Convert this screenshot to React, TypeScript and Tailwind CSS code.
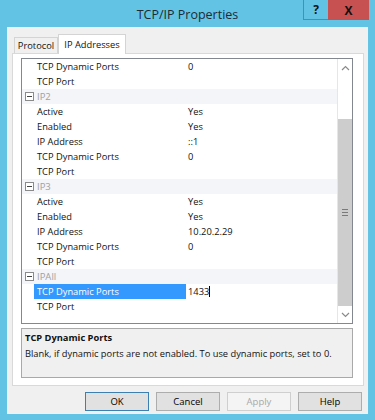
import React from "react";

type Row =
  | { kind: "prop"; name: string; value?: string; selected?: boolean }
  | { kind: "cat"; name: string };

const rows: Row[] = [
  { kind: "prop", name: "TCP Dynamic Ports", value: "0" },
  { kind: "prop", name: "TCP Port" },
  { kind: "cat", name: "IP2" },
  { kind: "prop", name: "Active", value: "Yes" },
  { kind: "prop", name: "Enabled", value: "Yes" },
  { kind: "prop", name: "IP Address", value: "::1" },
  { kind: "prop", name: "TCP Dynamic Ports", value: "0" },
  { kind: "prop", name: "TCP Port" },
  { kind: "cat", name: "IP3" },
  { kind: "prop", name: "Active", value: "Yes" },
  { kind: "prop", name: "Enabled", value: "Yes" },
  { kind: "prop", name: "IP Address", value: "10.20.2.29" },
  { kind: "prop", name: "TCP Dynamic Ports", value: "0" },
  { kind: "prop", name: "TCP Port" },
  { kind: "cat", name: "IPAll" },
  { kind: "prop", name: "TCP Dynamic Ports", value: "1433", selected: true },
  { kind: "prop", name: "TCP Port" },
];

function MinusBox() {
  return (
    <div className="w-[9px] h-[9px] border border-[#8a8a8a] bg-white flex items-center justify-center">
      <div className="w-[5px] h-px bg-[#444]" />
    </div>
  );
}

function GridRow({ row }: { row: Row }) {
  if (row.kind === "cat") {
    return (
      <div className="h-[15px] flex items-center bg-[#f3f5f9]">
        <div className="w-[15px] flex justify-end pr-[3px]">
          <MinusBox />
        </div>
        <span className="text-[#a0a0a0] font-medium text-[9.5px]">{row.name}</span>
      </div>
    );
  }
  return (
    <div className="h-[15px] flex items-center">
      <div className="w-[12px] self-stretch" />
      <div
        className={
          row.selected
            ? "w-[152px] self-stretch flex items-center pl-[3px] bg-[#3399ff] text-white"
            : "w-[152px] self-stretch flex items-center pl-[3px] text-[#111]"
        }
      >
        {row.name}
      </div>
      <div className="flex-1 pl-[2px] flex items-center text-[#111]">
        {row.value}
        {row.selected && <span className="w-px h-[11px] bg-black" />}
      </div>
    </div>
  );
}

function Chevron({ up }: { up?: boolean }) {
  return (
    <svg width="9" height="6" viewBox="0 0 9 6">
      <path
        d={up ? "M1 5 L4.5 1.5 L8 5" : "M1 1 L4.5 4.5 L8 1"}
        stroke="#8a8a8a"
        strokeWidth="1.2"
        fill="none"
      />
    </svg>
  );
}

function ScrollBar() {
  return (
    <div className="w-[15px] flex flex-col border-l border-[#e6e6e6] bg-[#f4f4f4]">
      <div className="h-[17px] flex items-center justify-center bg-white">
        <Chevron up />
      </div>
      <div className="h-[43px] bg-white" />
      <div className="flex-1 bg-[#cdcdcd] flex items-center justify-center">
        <div className="flex flex-col gap-[2px] w-[6px]">
          <div className="h-px bg-[#7a7a7a]" />
          <div className="h-px bg-[#7a7a7a]" />
          <div className="h-px bg-[#7a7a7a]" />
        </div>
      </div>
      <div className="h-[17px] flex items-center justify-center bg-white">
        <Chevron />
      </div>
    </div>
  );
}

function Btn({ label, kind }: { label: string; kind?: "default" | "disabled" }) {
  const cls =
    kind === "default"
      ? "border-[#3c7fb1] bg-[#e1e1e1] text-black"
      : kind === "disabled"
      ? "border-[#cfcfcf] bg-[#f4f4f4] text-[#a8a8a8]"
      : "border-[#adadad] bg-[#e1e1e1] text-black";
  return (
    <div className={"w-[64px] h-[19px] border flex items-center justify-center text-[9.5px] " + cls}>
      {label}
    </div>
  );
}

export default function App() {
  return (
    <div
      className="w-[375px] h-[420px] bg-[#62c3e4] flex flex-col text-[9.3px] leading-[15px] overflow-hidden"
      style={{ fontFamily: '"Open Sans", "Noto Sans", sans-serif' }}
    >
      {/* title bar */}
      <div className="h-[27px] flex shrink-0">
        <div className="w-[72px]" />
        <div className="flex-1 flex items-center justify-center text-[12.5px] text-[#1e2b36] pt-[1px]">
          TCP/IP Properties
        </div>
        <div className="flex items-start pr-[6px]">
          <div className="w-[25px] h-[20px] border-l border-b border-[#3f93b5] flex items-center justify-center text-[12px] font-bold text-[#111]">
            ?
          </div>
          <div className="w-[41px] h-[20px] bg-[#c75050] flex items-center justify-center text-[12px] font-bold text-[#111]">
            X
          </div>
        </div>
      </div>

      {/* client area */}
      <div className="mx-[7px] h-[387px] bg-[#f0f0f0] flex flex-col">
        {/* tabs */}
        <div className="flex items-end pl-[7px] pt-[6px] h-[26px] shrink-0">
          <div className="w-[44px] h-[16px] border border-b-0 border-[#d4d4d4] bg-[#f0f0f0] flex items-center justify-center text-[#111]">
            Protocol
          </div>
          <div className="w-[68px] h-[20px] -mb-px relative border border-b-0 border-[#d4d4d4] bg-white flex items-center justify-center text-[#111]">
            IP Addresses
          </div>
        </div>

        {/* panel */}
        <div className="ml-[5px] w-[352px] h-[333px] border border-[#d9d9d9] bg-white flex flex-col pt-[4px] pl-[8px]">
          {/* property grid */}
          <div className="w-[332px] h-[266px] border border-[#828790] flex bg-white">
            <div className="flex-1 flex flex-col">
              {rows.map((r, i) => (
                <GridRow key={i} row={r} />
              ))}
            </div>
            <ScrollBar />
          </div>

          {/* description */}
          <div className="mt-[4px] w-[332px] h-[50px] border border-[#a9a9a9] bg-[#f0f0f0] px-[3px] pt-[1px] text-[#111]">
            <div className="font-bold">TCP Dynamic Ports</div>
            <div className="mt-[1px]">
              Blank, if dynamic ports are not enabled. To use dynamic ports, set to 0.
            </div>
          </div>
        </div>

        {/* buttons */}
        <div className="flex justify-end gap-[7px] pr-[6px] mt-[6px]">
          <Btn label="OK" kind="default" />
          <Btn label="Cancel" />
          <Btn label="Apply" kind="disabled" />
          <Btn label="Help" />
        </div>
      </div>
    </div>
  );
}
